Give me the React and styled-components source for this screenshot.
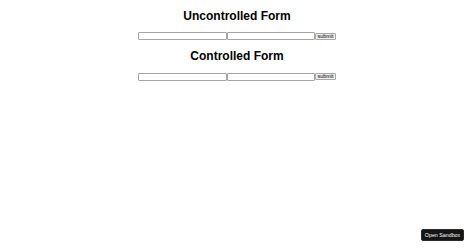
import React from 'react';
import styled, { createGlobalStyle } from 'styled-components';

const GlobalStyle = createGlobalStyle`
    html, body {
        margin: 0;
        padding: 0;
        background: #fff;
        font-family: "Liberation Sans", Arial, sans-serif;
    }
`;

const Page = styled.div`
    display: flex;
    flex-direction: column;
    align-items: center;
    padding-top: 10px;
    height: 248px;
    box-sizing: border-box;
`;

const Title = styled.h1`
    margin: ${p => (p.first ? '0' : '10px 0 0')};
    font-size: 12px;
    font-weight: bold;
    line-height: 13.4px;
    color: #000;
`;

const Form = styled.form`
    display: flex;
    align-items: center;
    height: 8px;
    margin-top: 9px;
`;

const Field = styled.input`
    box-sizing: border-box;
    width: 88.5px;
    height: 8px;
    margin: 0;
    padding: 0;
    border: 1px solid #a4a4a4;
    border-radius: 1px;
    background: #fff;
    outline: none;
`;

const Submit = styled.button`
    box-sizing: border-box;
    width: 21px;
    height: 7px;
    margin: 0;
    padding: 0;
    border: 1px solid #a8a8a8;
    border-radius: 1px;
    background: #efefef;
    color: #000;
    font-family: "Liberation Sans", Arial, sans-serif;
    font-size: 5.4px;
    line-height: 5px;
`;

const SandboxButton = styled.a`
    position: fixed;
    right: 10px;
    bottom: 7px;
    width: 43px;
    height: 12px;
    box-sizing: border-box;
    display: flex;
    align-items: center;
    justify-content: center;
    background: #151515;
    border: 1px solid #2c2c2c;
    border-radius: 2px;
    color: #fff;
    font-size: 5.3px;
    text-decoration: none;
`;

function DemoForm() {
    return (
        <Form onSubmit={e => e.preventDefault()}>
            <Field type='text' />
            <Field type='text' />
            <Submit type='submit'>submit</Submit>
        </Form>
    );
}

export default function App() {
    return (
        <>
            <GlobalStyle />
            <Page>
                <Title first>Uncontrolled Form</Title>
                <DemoForm />
                <Title>Controlled Form</Title>
                <DemoForm />
            </Page>
            <SandboxButton href='#'>Open Sandbox</SandboxButton>
        </>
    );
}
